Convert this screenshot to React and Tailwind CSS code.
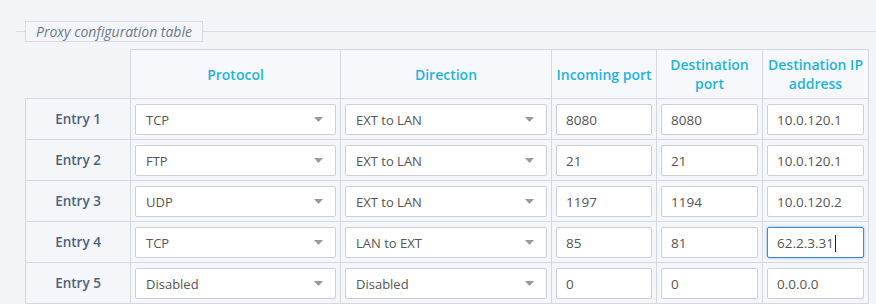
const rows = [
  { label: 'Entry 1', protocol: 'TCP', direction: 'EXT to LAN', inPort: '8080', destPort: '8080', ip: '10.0.120.1' },
  { label: 'Entry 2', protocol: 'FTP', direction: 'EXT to LAN', inPort: '21', destPort: '21', ip: '10.0.120.1' },
  { label: 'Entry 3', protocol: 'UDP', direction: 'EXT to LAN', inPort: '1197', destPort: '1194', ip: '10.0.120.2' },
  { label: 'Entry 4', protocol: 'TCP', direction: 'LAN to EXT', inPort: '85', destPort: '81', ip: '62.2.3.31', focused: true },
  { label: 'Entry 5', protocol: 'Disabled', direction: 'Disabled', inPort: '0', destPort: '0', ip: '0.0.0.0' },
];

function Select({ value }) {
  return (
    <div className="h-[31px] w-full flex items-center justify-between bg-white border border-[#ccd0d6] rounded-[2px] pl-[10px] pr-[12px] text-[13px] text-[#555]">
      <span className="pt-[3px]">{value}</span>
      <svg width="9" height="5" viewBox="0 0 9 5">
        <path d="M0 0h9L4.5 5z" fill="#999" />
      </svg>
    </div>
  );
}

function Field({ value, focused }) {
  return (
    <div
      className={`h-[31px] w-full flex items-center bg-white rounded-[2px] pl-[9px] text-[13.5px] text-[#555] border ${
        focused ? 'border-[#3a8ad6] shadow-[0_0_3px_rgba(58,138,214,0.6)]' : 'border-[#ccd0d6]'
      }`}
    >
      <span className="pt-[3px]">{value}</span>
      {focused && <span className="w-px h-[17px] bg-[#222] ml-px mt-[2px]" />}
    </div>
  );
}

const th = 'border border-[#d3d7de] bg-[#f7f8fb] text-[14px] font-semibold text-[#1db4e0] leading-[19px] px-1 align-middle';
const td = 'border border-[#d3d7de] bg-[#f5f6fa] px-[4px] align-middle';

export default function App() {
  return (
    <div className="w-[876px] h-[304px] bg-[#f3f4f8] overflow-hidden font-['Open_Sans',sans-serif]">
      <div className="pt-[21px] pl-4 flex items-center">
        <div className="w-[9px] h-px bg-[#d8dbe1]" />
        <div className="h-[21px] px-[10px] border border-[#d8dbe1] bg-[#f4f5f8] italic text-[14px] leading-[19px] text-[#6b7a8d]">
          Proxy configuration table
        </div>
        <div className="flex-1 h-px bg-[#d8dbe1]" />
      </div>

      <table className="ml-[25px] mt-[7px] border-collapse table-fixed w-[843px]">
        <colgroup>
          <col className="w-[105px]" />
          <col className="w-[210px]" />
          <col className="w-[211px]" />
          <col className="w-[105px]" />
          <col className="w-[106px]" />
          <col className="w-[106px]" />
        </colgroup>
        <thead>
          <tr className="h-[49px]">
            <th className="border-b border-[#d3d7de]" />
            <th className={th}>Protocol</th>
            <th className={th}>Direction</th>
            <th className={th}>Incoming port</th>
            <th className={th}>Destination<br />port</th>
            <th className={th}>Destination IP<br />address</th>
          </tr>
        </thead>
        <tbody>
          {rows.map((r) => (
            <tr key={r.label} className="h-[41px]">
              <td className={`${td} text-center text-[13.5px] font-semibold text-[#4f627b] pt-[1px]`}>{r.label}</td>
              <td className={td}><Select value={r.protocol} /></td>
              <td className={td}><Select value={r.direction} /></td>
              <td className={td}><Field value={r.inPort} /></td>
              <td className={td}><Field value={r.destPort} /></td>
              <td className={td}><Field value={r.ip} focused={r.focused} /></td>
            </tr>
          ))}
        </tbody>
      </table>
    </div>
  );
}
